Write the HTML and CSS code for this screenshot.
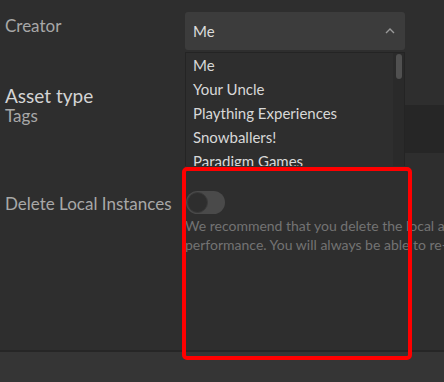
FILE: index.html
```html
<!DOCTYPE html>
<html lang="en">
<head>
    <meta charset="UTF-8">
    <title>Import Settings</title>
    <link rel="stylesheet" href="styles.css">
</head>
<body>
    <div class="page">
        <div class="settings">
            <div class="row row-creator">
                <div class="label">Creator</div>
                <div class="control">
                    <div class="select">
                        <span>Me</span>
                        <svg class="chevron" width="10" height="6" viewBox="0 0 10 6">
                            <polyline points="1,5 5,1 9,5" fill="none" stroke="#9a9a9a" stroke-width="1.4"/>
                        </svg>
                    </div>
                </div>
            </div>
            <div class="row row-asset">
                <div class="label label-big">Asset type</div>
            </div>
            <div class="row row-tags">
                <div class="label">Tags</div>
                <div class="control"><div class="tags-box"></div></div>
            </div>
            <div class="row row-delete">
                <div class="label label-delete">Delete Local Instances</div>
                <div class="control">
                    <div class="toggle"><div class="knob"></div></div>
                    <p class="hint">We recommend that you delete the local assets after uploading them for better performance. You will always be able to re-import them later.</p>
                </div>
            </div>

            <div class="dropdown">
                <ul class="options">
                    <li>Me</li>
                    <li>Your Uncle</li>
                    <li>Plaything Experiences</li>
                    <li>Snowballers!</li>
                    <li>Paradigm Games</li>
                    <li>Paradigm Studio</li>
                </ul>
                <div class="scroll"><div class="thumb"></div></div>
            </div>
        </div>
        <div class="footer"></div>
        <div class="highlight"></div>
    </div>
</body>
</html>
```

FILE: styles.css
```css
body {
    margin: 0;
    background-color: #2e2e2e;
    font-family: Lato, "Open Sans", sans-serif;
    overflow: hidden;
}
.page {
    height: 382px;
    display: flex;
    flex-direction: column;
    position: relative;
}
.settings {
    flex: 1;
    position: relative;
    padding-top: 12px;
}
.row {
    display: flex;
}
.label {
    width: 180px;
    flex-shrink: 0;
    padding-left: 5px;
    color: #a8a8a8;
    font-size: 17px;
}
.label-big {
    color: #d4d4d4;
    font-size: 19px;
}
.control {
    width: 259px;
    flex-shrink: 0;
}
.row-creator .label {
    padding-top: 3px;
}
.select {
    width: 220px;
    height: 38px;
    box-sizing: border-box;
    padding: 0 10px 0 8px;
    background-color: #3c3c3c;
    border-radius: 3px;
    display: flex;
    align-items: center;
    justify-content: space-between;
    color: #dcdcdc;
    font-size: 15px;
}
.row-asset {
    margin-top: 34px;
    height: 21px;
}
.row-tags {
    height: 48px;
}
.tags-box {
    height: 48px;
    width: 300px;
    background-color: #262626;
}
.row-delete {
    margin-top: 38px;
}
.label-delete {
    padding-top: 2px;
}
.toggle {
    width: 39px;
    height: 23px;
    border-radius: 12px;
    background-color: #4a4a4a;
    margin-left: 1px;
    position: relative;
}
.knob {
    position: absolute;
    left: 1px;
    top: 1px;
    width: 19px;
    height: 19px;
    border-radius: 50%;
    background-color: #2e2e2e;
    border: 1px solid #3a3a3a;
}
.hint {
    margin: 2px 0 0;
    width: 520px;
    color: #737373;
    font-size: 14px;
    line-height: 19px;
}
.dropdown {
    position: absolute;
    left: 185px;
    top: 52px;
    width: 220px;
    height: 114px;
    box-sizing: border-box;
    border: 1px solid #242424;
    border-bottom: none;
    background-color: #2e2e2e;
    overflow: hidden;
}
.options {
    list-style: none;
    margin: 0;
    padding: 0 0 0 7px;
    color: #d8d8d8;
    font-size: 15px;
}
.options li {
    height: 24px;
    line-height: 24px;
}
.scroll {
    position: absolute;
    right: 0;
    top: 0;
    bottom: 0;
    width: 11px;
    background-color: #2a2a2a;
}
.thumb {
    margin: 1px 0 0 3px;
    width: 6px;
    height: 25px;
    border-radius: 3px;
    background-color: #505050;
}
.footer {
    height: 30px;
    background-color: #353535;
    border-top: 2px solid #262626;
}
.highlight {
    position: absolute;
    left: 182px;
    top: 167px;
    width: 222px;
    height: 185px;
    border: 4px solid #ff0000;
    border-radius: 5px;
}
```
